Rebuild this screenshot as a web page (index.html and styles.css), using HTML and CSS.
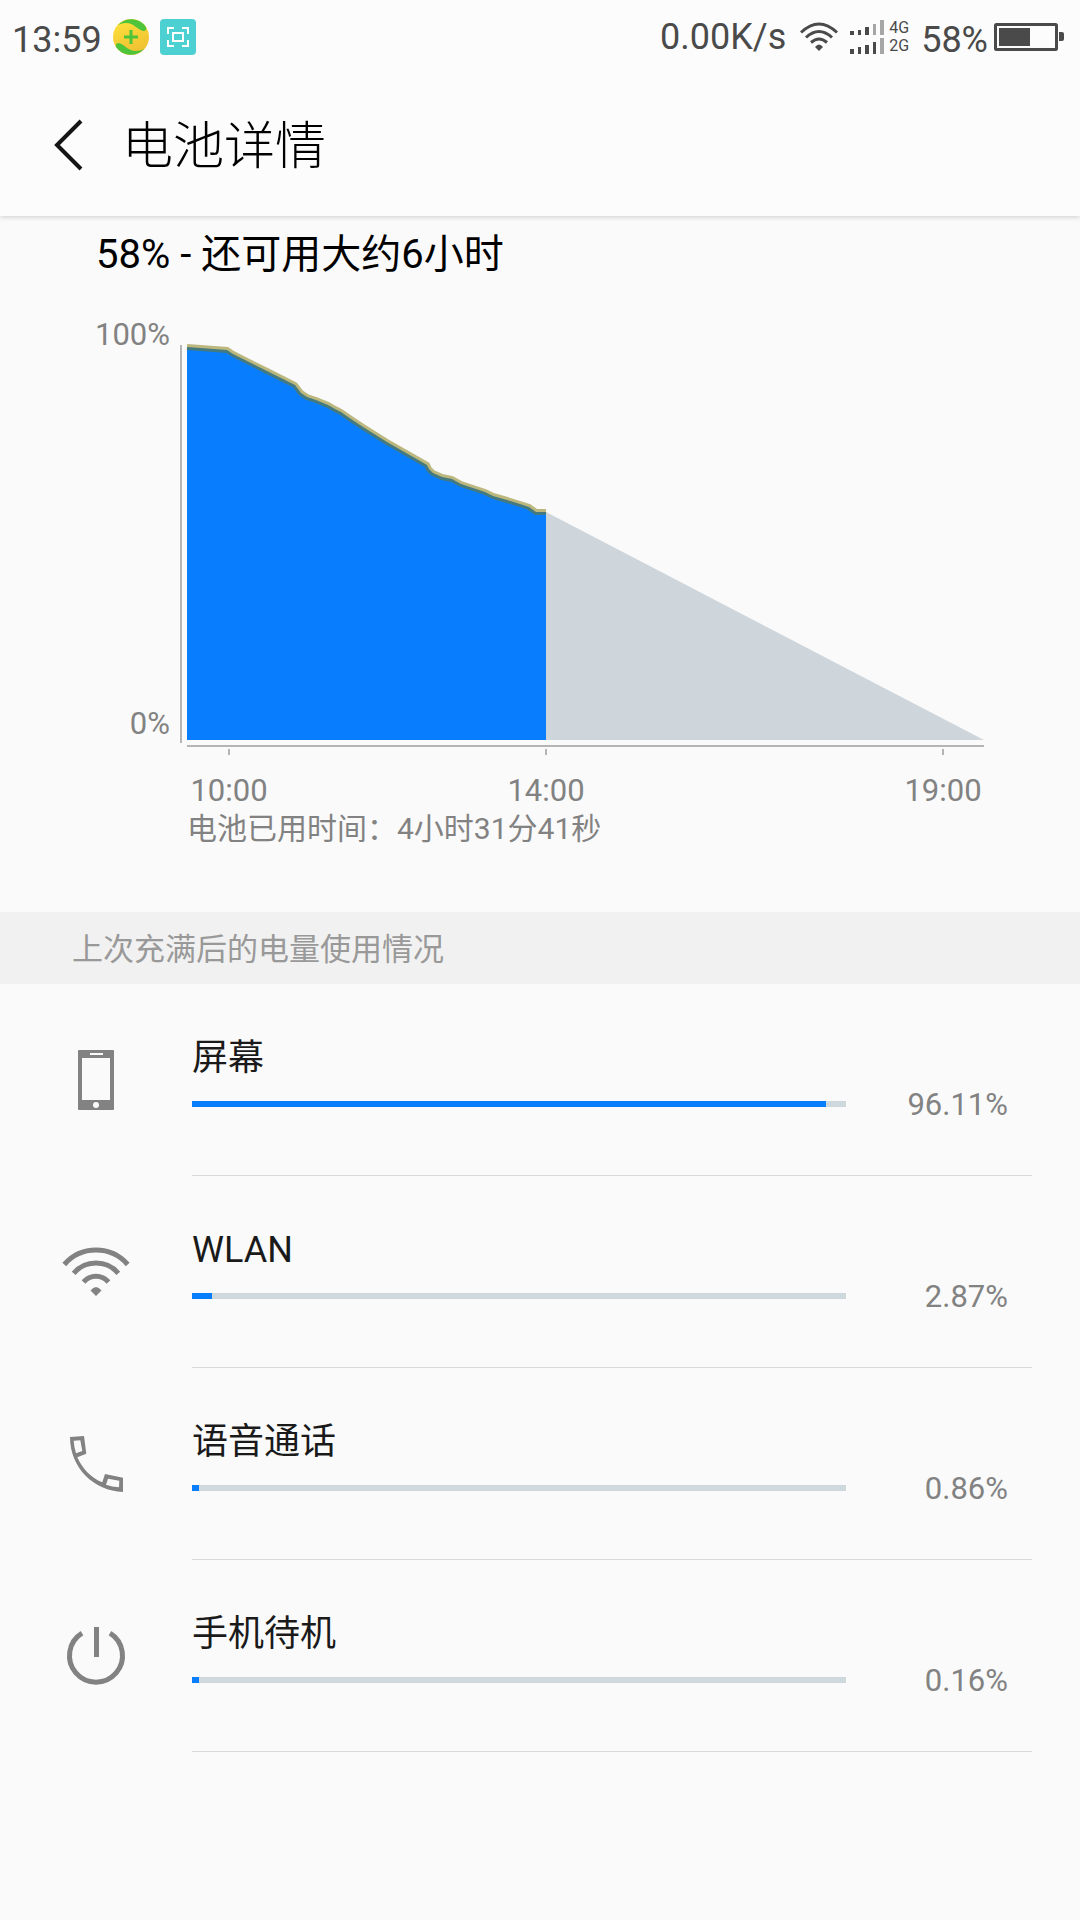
FILE: index.html
```html
<!DOCTYPE html>
<html lang="zh-CN">
<head>
  <meta charset="UTF-8" />
  <meta name="viewport" content="width=device-width, initial-scale=1.0"/>
  <title>电池详情</title>
  <link rel="stylesheet" href="styles.css">
</head>
<body>
  <header class="top">
    <div class="status">
      <span class="status-text">13:59</span>
      <svg class="app-icon" width="36" height="36" viewBox="0 0 36 36">
        <defs>
          <linearGradient id="gold" x1="0" y1="0" x2="0.4" y2="1">
            <stop offset="0" stop-color="#ffe43c"/>
            <stop offset="1" stop-color="#efc132"/>
          </linearGradient>
        </defs>
        <circle cx="18" cy="18" r="18" fill="url(#gold)"/>
        <path d="M5 6A18 18 0 0 1 33 8Q34 12 30 12C25 11 21 4 13 4Q9 4 5 6Z" fill="#4ec43a"/>
        <path d="M31 30A18 18 0 0 1 3 28Q2 24 6 24C11 25 15 32 23 32Q27 32 31 30Z" fill="#4ec43a"/>
        <path d="M18 11V25M11 18H25" stroke="#4ec43a" stroke-width="3"/>
      </svg>
      <svg class="app-icon" width="36" height="36" viewBox="0 0 36 36">
        <rect width="36" height="36" rx="4" fill="#4dd0d1"/>
        <path d="M8 15V9H14M22 9H28V15M28 21V27H22M14 27H8V21" fill="none" stroke="#fff" stroke-width="2"/>
        <rect x="13" y="14" width="10" height="8" fill="none" stroke="#fff" stroke-width="2"/>
      </svg>

      <span class="speed">0.00K/s</span>
      <svg class="status-wifi" width="38" height="30" viewBox="0 0 38 30">
        <g fill="none" stroke="#4a4a4a" stroke-width="3">
          <path d="M1 10.5Q19 -6.5 37 10.5"/>
          <path d="M6 15.5Q19 3.5 32 15.5"/>
          <path d="M11 20.5Q19 13.5 27 20.5"/>
        </g>
        <path d="M15 25Q19 20 23 25L19 29Z" fill="#4a4a4a"/>
      </svg>
      <svg class="signal" width="34" height="36" viewBox="0 0 34 36">
        <path d="M0 12h4v4h-4zM8 11h3v5h-3zM15 8h4v8h-4zM0 30h4v5h-4zM8 28h3v7h-3zM15 26h4v9h-4zM23 23h3v12h-3z" fill="#4a4a4a"/>
        <path d="M23 5h3v11h-3zM30 1h4v15h-4zM30 19h4v16h-4z" fill="#a6a6a6"/>
      </svg>
      <span class="networks"><span>4G</span><span>2G</span></span>
      <span class="status-text">58%</span>
      <svg class="battery" width="70" height="28" viewBox="0 0 70 28">
        <rect x="1.5" y="1.5" width="61" height="25" rx="1" fill="none" stroke="#4a4a4a" stroke-width="3"/>
        <rect x="5" y="5" width="31" height="18" fill="#4a4a4a"/>
        <path d="M65 9h3q2 0 2 2v5q0 2 -2 2h-3z" fill="#4a4a4a"/>
      </svg>
    </div>
    <div class="title-bar">
      <button class="back" type="button" aria-label="返回">
        <svg width="30" height="52" viewBox="0 0 30 52">
          <path d="M27 2L3 26L27 50" fill="none" stroke="#151515" stroke-width="4"/>
        </svg>
      </button>
      <h1>电池详情</h1>
    </div>
  </header>

  <main>
    <section class="history">
      <h2>58% - 还可用大约6小时</h2>
      <svg class="chart" viewBox="0 0 1080 514" role="img" aria-label="电量曲线">
        <!-- projected -->
        <path d="M546 212L984 440H546Z" fill="#ced6dc"/>
        <!-- used -->
        <path d="M187 47L227 50L233 54L267 71L295 85L301 93L307 97L316 100L328 105L335 109L341 112L351 119L363 127L387 142L427 165L429 169L433 173L442 177L452 179L461 184L473 188L485 192L493 196L507 200L520 204L529 207L536 212H546V440H187Z" fill="#087eff"/>
        <path d="M187 47L227 50L233 54L267 71L295 85L301 93L307 97L316 100L328 105L335 109L341 112L351 119L363 127L387 142L427 165L429 169L433 173L442 177L452 179L461 184L473 188L485 192L493 196L507 200L520 204L529 207L536 212H546" fill="none" stroke="#7d7300" stroke-opacity="0.5" stroke-width="6"/>
        <!-- axes -->
        <path d="M181 45V443M187 446H984M229 449V455M546 449V455M943 449V455" stroke="#b5b5b5" stroke-width="2"/>
        <g class="axis-end">
          <text x="170" y="45">100%</text>
          <text x="170" y="434">0%</text>
        </g>
        <g class="axis-mid">
          <text x="229" y="501">10:00</text>
          <text x="546" y="501">14:00</text>
          <text x="943" y="501">19:00</text>
        </g>
      </svg>
      <p class="duration">电池已用时间：4小时31分41秒</p>
    </section>

    <h2 class="section-title">上次充满后的电量使用情况</h2>

    <ul class="usage">
      <li>
        <svg class="icon" width="72" height="72" viewBox="0 0 72 72">
          <rect x="18" y="6" width="36" height="60" rx="1" fill="#828282"/>
          <path d="M22 14H50V56H22ZM30 9H43V11H30Z" fill="#fafafa"/>
          <circle cx="36" cy="61" r="3" fill="#fafafa"/>
        </svg>
        <div class="item">
          <label class="name" for="screen">屏幕</label>
          <div class="level">
            <progress id="screen" value="97" max="100"></progress>
            <span class="percent">96.11%</span>
          </div>
        </div>
      </li>
      <li>
        <svg class="icon" width="72" height="72" viewBox="0 0 72 72">
          <g fill="none" stroke="#828282" stroke-width="5">
            <path d="M4.3 28.5A42 42 0 0 1 67.7 28.5"/>
            <path d="M13.7 37.3A29.5 29.5 0 0 1 58.3 37.3"/>
            <path d="M23.5 46A16.5 16.5 0 0 1 48.5 46"/>
          </g>
          <path d="M30.5 54.5Q36 47.5 41.5 54.5L36 60Z" fill="#828282"/>
        </svg>
        <div class="item">
          <label class="name" for="wlan">WLAN</label>
          <div class="level">
            <progress id="wlan" value="3" max="100"></progress>
            <span class="percent">2.87%</span>
          </div>
        </div>
      </li>
      <li>
        <svg class="icon" width="72" height="72" viewBox="0 0 72 72">
          <path fill="#828282" fill-rule="evenodd" d="M10 9L24 8L26.3 25.7L17.3 29.3C22 40 31 50 42.3 54.3L45 46L63 49.7V64C34 63 10 40 10 9ZM13.7 12.7L20.3 12.3L22.3 23L16 25.3Q14 19 13.7 12.7ZM48 50.7L59.3 52.7L59 59.3Q52 59 46 56.7Z"/>
        </svg>
        <div class="item">
          <label class="name" for="call">语音通话</label>
          <div class="level">
            <progress id="call" value="1" max="100"></progress>
            <span class="percent">0.86%</span>
          </div>
        </div>
      </li>
      <li>
        <svg class="icon" width="72" height="72" viewBox="0 0 72 72">
          <path d="M22 13.2A26.5 26.5 0 1 0 50 13.2M36.5 7V37" fill="none" stroke="#828282" stroke-width="5"/>
        </svg>
        <div class="item">
          <label class="name" for="standby">手机待机</label>
          <div class="level">
            <progress id="standby" value="1" max="100"></progress>
            <span class="percent">0.16%</span>
          </div>
        </div>
      </li>
    </ul>
  </main>
</body>
</html>
```
FILE: styles.css
```css
* {
  box-sizing: border-box;
}
body {
  margin: 0;
  font-family: Roboto, "Noto Sans CJK SC", sans-serif;
  background-color: #fafafa;
  color: #1a1a1a;
}
h1, h2, p, ul {
  margin: 0;
  padding: 0;
  font-weight: normal;
}
svg {
  display: block;
  flex-shrink: 0;
}

/* status bar and title */
.top {
  background-color: #fcfcfc;
  box-shadow: 0 1px 5px rgba(0,0,0,0.18);
}
.status {
  display: flex;
  align-items: center;
  height: 74px;
  padding: 0 16px 0 12px;
  font-size: 36px;
  line-height: 42px;
  color: #4a4a4a;
}
.status-text {
  padding-top: 6px;
}
.app-icon {
  margin-left: 11px;
}
.speed {
  margin-left: auto;
}
.status-wifi {
  margin-left: 14px;
}
.signal {
  margin-left: 12px;
}
.networks {
  display: flex;
  flex-direction: column;
  margin: 0 12px 0 5px;
  font-size: 16px;
  line-height: 18px;
}
.battery {
  margin-left: 6px;
}
.title-bar {
  display: flex;
  align-items: center;
  height: 142px;
  padding-left: 54px;
}
.back {
  padding: 0;
  border: none;
  background: none;
  cursor: pointer;
}
h1 {
  margin-left: 38px;
  padding-top: 4px;
  font-size: 51px;
  line-height: 60px;
  font-weight: 300;
  color: #000;
}

/* battery chart */
.history {
  padding: 13px 0 69px;
}
.history h2 {
  padding-left: 96px;
  font-size: 40px;
  line-height: 52px;
  color: #000;
}
.chart {
  width: 100%;
  height: auto;
  margin-top: 19px;
  font-size: 31px;
}
.chart text {
  fill: #828282;
}
.axis-end {
  text-anchor: end;
}
.axis-mid {
  text-anchor: middle;
}
.duration {
  padding-left: 187px;
  font-size: 30px;
  line-height: 29px;
  color: #828282;
}

/* usage list */
.section-title {
  padding: 4px 0 0 72px;
  background-color: #f1f1f1;
  font-size: 31px;
  line-height: 68px;
  color: #999;
}
.usage {
  list-style: none;
}
.usage li {
  display: flex;
  align-items: center;
  height: 192px;
  padding: 0 48px 0 60px;
}
.item {
  flex: 1;
  height: 192px;
  margin-left: 60px;
  padding-top: 47px;
  border-bottom: 1px solid #dadada;
}
.name {
  display: block;
  font-size: 36px;
  line-height: 54px;
}
.level {
  display: flex;
  align-items: center;
  height: 38px;
}
progress {
  flex: 1;
  height: 6px;
  border: none;
  appearance: none;
  -webkit-appearance: none;
}
progress::-webkit-progress-bar {
  background-color: #cfd8dc;
}
progress::-webkit-progress-value {
  background-color: #087eff;
}
.percent {
  width: 186px;
  padding: 2px 24px 0 0;
  font-size: 31px;
  line-height: 36px;
  text-align: right;
  color: #828282;
}
```
